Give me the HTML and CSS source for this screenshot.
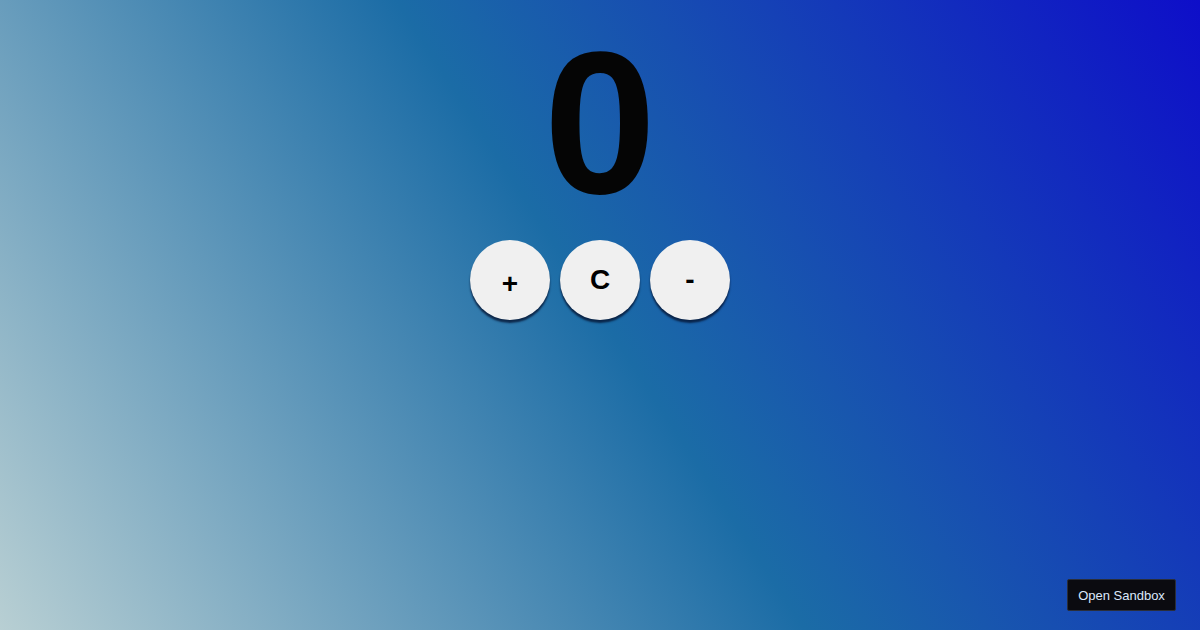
FILE: index.html
```html
<!DOCTYPE html>
<html lang="en">
<head>
<meta charset="utf-8">
<title>Counter</title>
<link rel="stylesheet" href="styles.css">
</head>
<body>
<main class="app">
  <div class="count">0</div>
  <div class="controls">
    <button class="btn btn-plus">+</button>
    <button class="btn">C</button>
    <button class="btn">-</button>
  </div>
</main>
<a class="open-sandbox" href="#">Open Sandbox</a>
</body>
</html>
```
FILE: styles.css
```css
html, body {
  height: 100%;
}
body {
  margin: 0;
  font-family: "Liberation Sans", Arial, sans-serif;
  background: linear-gradient(57deg, #b8cfd3 0%, #1b6ca6 50%, #0e0ec9 100%);
  overflow: hidden;
}
.app {
  display: flex;
  flex-direction: column;
  align-items: center;
  padding-top: 6px;
}
.count {
  font-size: 202px;
  font-weight: 700;
  line-height: 234px;
  color: #050505;
}
.controls {
  display: flex;
  gap: 10px;
}
.btn {
  width: 80px;
  height: 80px;
  border-radius: 50%;
  border: none;
  background: #f0f0f0;
  font-family: "Liberation Sans", Arial, sans-serif;
  font-size: 28px;
  font-weight: 700;
  color: #000;
  padding: 0;
  box-shadow: 0 3px 2px rgba(5, 20, 50, 0.8);
}
.btn-plus {
  padding-top: 8px;
}
.open-sandbox {
  position: fixed;
  right: 24px;
  bottom: 19px;
  width: 109px;
  height: 32px;
  box-sizing: border-box;
  display: flex;
  align-items: center;
  justify-content: center;
  background: #0b0b10;
  border: 1px solid #2a2e3a;
  border-radius: 2px;
  color: #dce8fb;
  font-size: 13px;
  text-decoration: none;
}
```
